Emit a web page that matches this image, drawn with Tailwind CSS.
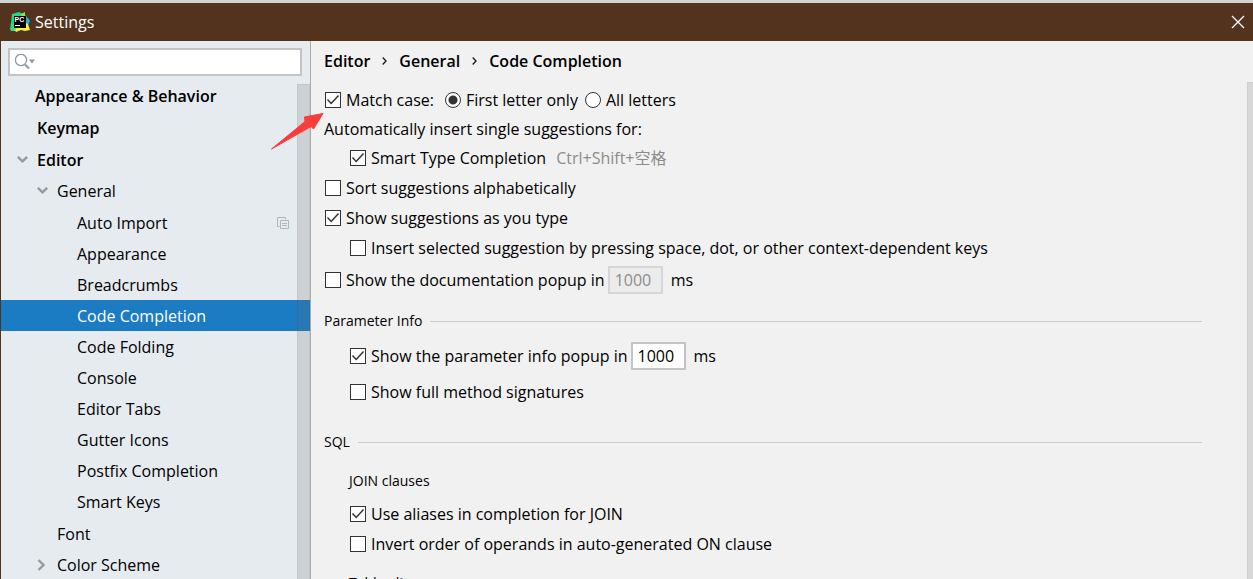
<!DOCTYPE html>
<html lang="en">
<head>
    <meta charset="UTF-8">
    <meta name="viewport" content="width=device-width, initial-scale=1.0">
    <title>Settings</title>
    <script src="https://cdn.jsdelivr.net/npm/@tailwindcss/browser@4"></script>
    <style>
        body {
            font-family: 'Open Sans', 'Noto Sans CJK SC', sans-serif;
        }
        input[type="checkbox"]:checked {
            background-image: url("data:image/svg+xml,%3Csvg xmlns='http://www.w3.org/2000/svg' viewBox='0 0 14 14'%3E%3Cpath d='M1.5 6.5l3.7 4L12.5 2.5' fill='none' stroke='%23333' stroke-width='1.5'/%3E%3C/svg%3E");
        }
        input[type="radio"]:checked {
            background-image: radial-gradient(circle, #333 4px, transparent 5px);
        }
    </style>
</head>
<body class="h-screen overflow-hidden flex flex-col bg-[#f1f1f1] text-black text-[16px] leading-5">
    <header class="flex items-center h-[41px] shrink-0 border-t-3 border-[#d3d3d3] bg-[#53331e] pl-[10px] pr-2 text-white">
        <svg class="w-5 h-5 mr-[5px]" viewBox="0 0 20 20">
            <path d="M2 2L9 0L13 2L11 12L5 19H1L0 17L1 11Z" fill="#21d789"/>
            <path d="M11 2L15 0V3L17 5L14 12Z" fill="#8be05a"/>
            <path d="M15 5L18 6L20 9L18 13H14Z" fill="#10b6e8"/>
            <path d="M5 13L16 11L18 12L20 18L15 19L11 18L6 20L4 17Z" fill="#f3f04b"/>
            <path d="M1 12L5 11L6 17L4 19H1Z" fill="#36d985"/>
            <rect x="4" y="4" width="12" height="12" fill="#000"/>
            <text x="4.6" y="10.4" font-family="Liberation Sans" font-size="7" font-weight="bold" fill="#fff">PC</text>
            <rect x="5" y="13" width="5" height="1" fill="#fff"/>
        </svg>
        <h1>Settings</h1>
        <button class="ml-auto" aria-label="Close">
            <svg class="w-[14px] h-[14px]" viewBox="0 0 14 14" fill="none" stroke="#fff" stroke-width="1.3"><path d="M1 1L13 13M13 1L1 13"/></svg>
        </button>
    </header>

    <div class="flex flex-1 min-h-0">
        <!-- Sidebar -->
        <aside class="relative w-[311px] shrink-0 bg-[#e6ebef] border-l border-l-[#53331e] border-r border-r-[#ababab] overflow-hidden">
            <div class="relative mt-[7px] ml-[7px] mr-2">
                <input type="text" aria-label="Search settings" class="block w-full h-7 bg-white border-2 border-[#c4c4c4] pl-8 outline-none">
                <svg class="absolute left-[7px] top-[6px] w-5 h-4" viewBox="0 0 20 16" fill="none" stroke="#8d979d">
                    <circle cx="6" cy="6" r="5.6" stroke-width="1.3"/>
                    <path d="M10 10.5L14 14.5" stroke-width="2"/>
                    <path d="M14 5.5H20L17 9.5Z" fill="#8d979d" stroke="none"/>
                </svg>
            </div>
            <nav class="pt-[3px]">
                <ul>
                    <li><a href="#" class="flex items-center h-[33px] pl-[34px] font-semibold">Appearance &amp; Behavior</a></li>
                    <li><a href="#" class="flex items-center h-8 pl-9 font-semibold">Keymap</a></li>
                    <li>
                        <a href="#" class="flex items-center h-[31px] pl-4 font-semibold">
                            <svg class="w-[11px] h-[7px] mr-[9px]" viewBox="0 0 11 7" fill="none" stroke="#999" stroke-width="2.4"><path d="M0.8 0.8L5.5 5.3L10.2 0.8"/></svg>Editor</a>
                        <ul>
                            <li>
                                <a href="#" class="flex items-center h-[31px] pl-9">
                                    <svg class="w-[11px] h-[7px] mr-[9px]" viewBox="0 0 11 7" fill="none" stroke="#999" stroke-width="2.4"><path d="M0.8 0.8L5.5 5.3L10.2 0.8"/></svg>General</a>
                                <ul class="py-px">
                                    <li>
                                        <a href="#" class="flex items-center h-[31px] pl-[76px] pr-[21px]">Auto Import
                                            <svg class="w-3 h-3 ml-auto" viewBox="0 0 12 12" fill="none" stroke="#abb6bd"><path d="M2.5 9.5H0.5V0.5H8.5V2.5M3.5 3.5H11.5V11.5H3.5ZM5 6.5H10M5 8.5H10"/></svg>
                                        </a>
                                    </li>
                                    <li><a href="#" class="flex items-center h-[31px] pl-[76px]">Appearance</a></li>
                                    <li><a href="#" class="flex items-center h-[31px] pl-[76px]">Breadcrumbs</a></li>
                                    <li><a href="#" class="flex items-center h-[31px] pl-[76px] bg-[#1b7cc4] text-white">Code Completion</a></li>
                                    <li><a href="#" class="flex items-center h-[31px] pl-[76px]">Code Folding</a></li>
                                    <li><a href="#" class="flex items-center h-[31px] pl-[76px]">Console</a></li>
                                    <li><a href="#" class="flex items-center h-[31px] pl-[76px]">Editor Tabs</a></li>
                                    <li><a href="#" class="flex items-center h-[31px] pl-[76px]">Gutter Icons</a></li>
                                    <li><a href="#" class="flex items-center h-[31px] pl-[76px]">Postfix Completion</a></li>
                                    <li><a href="#" class="flex items-center h-[31px] pl-[76px]">Smart Keys</a></li>
                                </ul>
                            </li>
                            <li><a href="#" class="flex items-center h-[31px] pl-14">Font</a></li>
                            <li>
                                <a href="#" class="flex items-center h-[31px] pl-9">
                                    <svg class="w-2 h-3 mr-3" viewBox="0 0 8 12" fill="none" stroke="#999" stroke-width="2.4"><path d="M1.5 1L6.5 6L1.5 11"/></svg>Color Scheme</a>
                            </li>
                        </ul>
                    </li>
                </ul>
            </nav>
            <!-- Scrollbar thumb -->
            <div class="absolute right-0 top-[43px] bottom-0 w-[13px] border-t border-x border-black/5 bg-[#686868]/20"></div>
        </aside>

        <!-- Content -->
        <main class="relative flex-1 min-w-0 overflow-hidden pl-[13px] pr-[51px]">
            <nav class="flex items-center h-10 font-semibold" aria-label="Breadcrumb">
                <a href="#">Editor</a>
                <svg class="w-[5px] h-2 mx-3" viewBox="0 0 5 8" fill="none" stroke="#222" stroke-width="1.4"><path d="M0.7 0.5L4 4L0.7 7.5"/></svg>
                <a href="#">General</a>
                <svg class="w-[5px] h-2 mx-3" viewBox="0 0 5 8" fill="none" stroke="#222" stroke-width="1.4"><path d="M0.7 0.5L4 4L0.7 7.5"/></svg>
                <span>Code Completion</span>
            </nav>

            <div class="flex items-center h-[30px] mt-1">
                <input type="checkbox" id="match-case" checked class="appearance-none w-4 h-4 mx-px mr-[5px] bg-white border border-[#333]">
                <label for="match-case">Match case:</label>
                <input type="radio" id="first-letter" name="match" checked class="appearance-none w-4 h-4 ml-[11px] mr-[5px] rounded-full bg-white border border-[#333]">
                <label for="first-letter">First letter only</label>
                <input type="radio" id="all-letters" name="match" class="appearance-none w-4 h-4 ml-[7px] mr-[5px] rounded-full bg-white border border-[#333]">
                <label for="all-letters">All letters</label>
            </div>
            <p class="flex items-center h-7">Automatically insert single suggestions for:</p>
            <div class="flex items-center h-[30px] pl-[25px]">
                <input type="checkbox" id="smart-type" checked class="appearance-none w-4 h-4 mx-px mr-[5px] bg-white border border-[#333]">
                <label for="smart-type">Smart Type Completion</label>
                <span class="ml-[10px] text-[#8c8c8c]">Ctrl+Shift+空格</span>
            </div>
            <div class="flex items-center h-[30px]">
                <input type="checkbox" id="sort" class="appearance-none w-4 h-4 mx-px mr-[5px] bg-white border border-[#333]">
                <label for="sort">Sort suggestions alphabetically</label>
            </div>
            <div class="flex items-center h-[30px]">
                <input type="checkbox" id="as-you-type" checked class="appearance-none w-4 h-4 mx-px mr-[5px] bg-white border border-[#333]">
                <label for="as-you-type">Show suggestions as you type</label>
            </div>
            <div class="flex items-center h-[30px] pl-[25px]">
                <input type="checkbox" id="insert-selected" class="appearance-none w-4 h-4 mx-px mr-[5px] bg-white border border-[#333]">
                <label for="insert-selected">Insert selected suggestion by pressing space, dot, or other context-dependent keys</label>
            </div>
            <div class="flex items-center h-[34px]">
                <input type="checkbox" id="doc-popup" class="appearance-none w-4 h-4 mx-px mr-[5px] bg-white border border-[#333]">
                <label for="doc-popup">Show the documentation popup in</label>
                <input type="text" value="1000" disabled aria-label="Documentation popup delay" class="w-[55px] h-7 ml-[3px] mr-2 px-[5px] border-2 border-[#d6d6d6] bg-[#ececec] text-[#8c8c8c]">
                <span>ms</span>
            </div>

            <section>
                <div class="flex items-center h-12">
                    <h2 class="text-[14px] mr-2">Parameter Info</h2>
                    <hr class="flex-1 border-[#cbcbcb]">
                </div>
                <div class="flex items-center h-[22px] pl-[25px]">
                    <input type="checkbox" id="param-popup" checked class="appearance-none w-4 h-4 mx-px mr-[5px] bg-white border border-[#333]">
                    <label for="param-popup">Show the parameter info popup in</label>
                    <input type="text" value="1000" aria-label="Parameter info popup delay" class="w-[55px] h-7 ml-[3px] mr-2 px-[5px] border-2 border-[#c4c4c4] bg-white">
                    <span>ms</span>
                </div>
                <div class="flex items-center h-[50px] pl-[25px]">
                    <input type="checkbox" id="full-signatures" class="appearance-none w-4 h-4 mx-px mr-[5px] bg-white border border-[#333]">
                    <label for="full-signatures">Show full method signatures</label>
                </div>
            </section>

            <section>
                <div class="flex items-center h-[50px]">
                    <h2 class="text-[14px] mr-2">SQL</h2>
                    <hr class="flex-1 border-[#cbcbcb]">
                </div>
                <h3 class="flex items-center h-7 mb-1 pl-[25px] text-[14px]">JOIN clauses</h3>
                <div class="flex items-center h-[30px] pl-[25px]">
                    <input type="checkbox" id="use-aliases" checked class="appearance-none w-4 h-4 mx-px mr-[5px] bg-white border border-[#333]">
                    <label for="use-aliases">Use aliases in completion for JOIN</label>
                </div>
                <div class="flex items-center h-[30px] pl-[25px]">
                    <input type="checkbox" id="invert-order" class="appearance-none w-4 h-4 mx-px mr-[5px] bg-white border border-[#333]">
                    <label for="invert-order">Invert order of operands in auto-generated ON clause</label>
                </div>
                <h3 class="flex items-center h-12 pl-[25px] text-[14px]">Table aliases</h3>
            </section>

            <!-- Scrollbar thumb -->
            <div class="absolute right-0 top-[41px] bottom-0 w-[6px] border-t border-l border-[#cfcfcf] bg-[#d8d8d8]"></div>
        </main>
    </div>

    <!-- Arrow pointing at Match case -->
    <svg class="absolute left-[271px] top-[112px] w-[53px] h-[38px]" viewBox="0 0 53 38">
        <path d="M0.5 37L34 9.5L33.5 5L52 1.5L42.5 17L40 14.5Z" fill="#fc3c3b" stroke="#fc3c3b" stroke-linejoin="round"/>
    </svg>
</body>
</html>
